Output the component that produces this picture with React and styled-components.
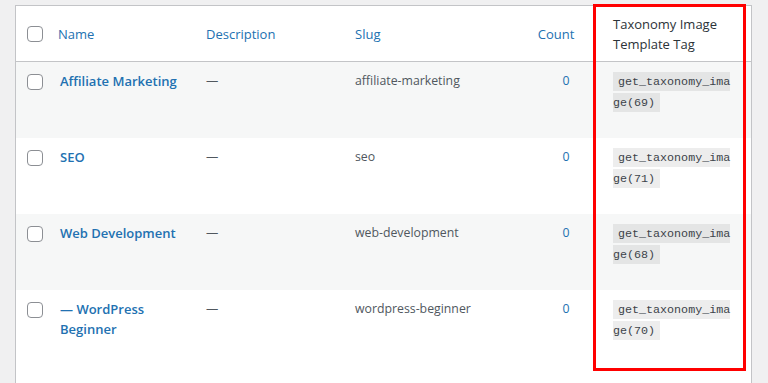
import styled, { createGlobalStyle } from 'styled-components';

const GlobalStyle = createGlobalStyle`
  html, body {
    margin: 0;
    padding: 0;
    background: #f0f0f1;
  }
  body {
    font-family: "Open Sans", "Noto Sans", sans-serif;
    font-size: 12.3px;
    color: #50575e;
  }
`;

const Page = styled.div`
  position: relative;
  height: 383px;
  overflow: hidden;
  padding: 5px 16px 0 15px;
  box-sizing: border-box;
  display: flex;
  flex-direction: column;
`;

const Table = styled.div`
  flex: 1;
  display: flex;
  flex-direction: column;
  background: #fff;
  border: 1px solid #c3c4c7;
  border-bottom: none;
`;

const cols = '32px 148px 149px 184px 74px 148px';

const HeadRow = styled.div`
  display: grid;
  grid-template-columns: ${cols};
  height: 55px;
  align-items: center;
  border-bottom: 1px solid #c3c4c7;
  font-size: 13px;
`;

const Row = styled.div`
  display: grid;
  grid-template-columns: ${cols};
  align-items: start;
  height: 76px;
  flex: ${(p) => (p.$last ? 1 : 'none')};
  background: ${(p) => (p.$striped ? '#f6f7f7' : '#fff')};
`;

const Box = styled.span`
  display: block;
  width: 16px;
  height: 16px;
  box-sizing: border-box;
  border: 1px solid #8c8f94;
  border-radius: 4px;
  background: #fff;
`;

const CheckCell = styled.div`
  padding-left: 11px;
  padding-top: ${(p) => (p.$head ? '0' : '12px')};
`;

const HeadCell = styled.div`
  padding: ${(p) => (p.$center ? '0' : '0 10px')};
  line-height: 20px;
  white-space: ${(p) => (p.$center ? 'nowrap' : 'normal')};
  text-align: ${(p) => (p.$center ? 'center' : 'left')};
  color: ${(p) => (p.$plain ? '#2c3338' : '#2271b1')};
`;

const Sorter = styled.span`
  display: inline-block;
  width: 20px;
`;

const Cell = styled.div`
  padding: 9px 10px 0;
  line-height: 20px;
  text-align: ${(p) => (p.$center ? 'center' : 'left')};
  color: ${(p) => (p.$link ? '#2271b1' : '#50575e')};
`;

const Title = styled.a`
  display: block;
  padding-left: 2px;
  font-size: 13px;
  font-weight: 600;
  color: #2271b1;
  text-decoration: none;
  line-height: 20px;
`;

const TagCell = styled.div`
  padding: 10px 0 0 10px;
  width: 120px;
  font-family: "Liberation Mono", monospace;
  font-size: 11.7px;
  line-height: 20.5px;
  word-break: break-all;
`;

const Code = styled.code`
  font-family: "Liberation Mono", monospace;
  font-size: 11.7px;
  line-height: 20.5px;
  color: #3c434a;
  background: rgba(0, 0, 0, 0.07);
  padding: 3px 5px 2px;
`;

const Frame = styled.div`
  position: absolute;
  left: 593px;
  top: 4px;
  width: 153px;
  height: 367px;
  box-sizing: border-box;
  border: 3px solid #f00;
  pointer-events: none;
`;

const terms = [
  { name: 'Affiliate Marketing', slug: 'affiliate-marketing', id: 69 },
  { name: 'SEO', slug: 'seo', id: 71 },
  { name: 'Web Development', slug: 'web-development', id: 68 },
  { name: '— WordPress Beginner', slug: 'wordpress-beginner', id: 70 },
];

export default function App() {
  return (
    <>
      <GlobalStyle />
      <Page>
        <Table>
          <HeadRow>
            <CheckCell $head>
              <Box />
            </CheckCell>
            <HeadCell>Name</HeadCell>
            <HeadCell>Description</HeadCell>
            <HeadCell>Slug</HeadCell>
            <HeadCell $center>
              Count<Sorter />
            </HeadCell>
            <HeadCell $plain>Taxonomy Image Template Tag</HeadCell>
          </HeadRow>
          {terms.map((t, i) => (
            <Row key={t.id} $striped={i % 2 === 0} $last={i === terms.length - 1}>
              <CheckCell>
                <Box />
              </CheckCell>
              <Cell>
                <Title href="#">{t.name}</Title>
              </Cell>
              <Cell>—</Cell>
              <Cell>{t.slug}</Cell>
              <Cell $center $link>0</Cell>
              <TagCell>
                <Code>get_taxonomy_image({t.id})</Code>
              </TagCell>
            </Row>
          ))}
        </Table>
        <Frame />
      </Page>
    </>
  );
}
